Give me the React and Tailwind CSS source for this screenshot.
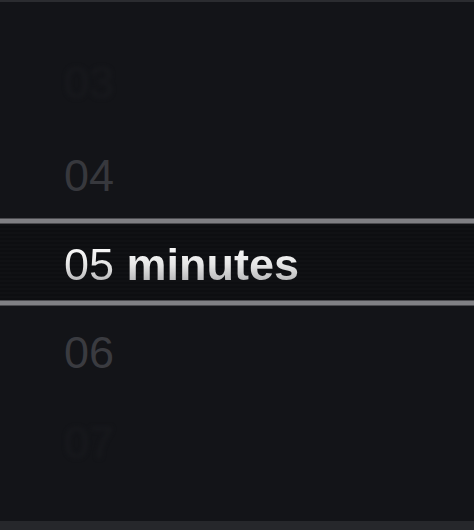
const font = { fontFamily: '"Liberation Sans", Arial, sans-serif' };

function DimRow({ value, className, textClass }) {
  return (
    <div className={`flex items-center pl-[64px] ${className}`}>
      <span className={`text-[45px] leading-none ${textClass}`}>{value}</span>
    </div>
  );
}

export default function App() {
  return (
    <div className="flex h-[530px] w-full flex-col bg-[#131418]" style={font}>
      <div className="h-[2px] bg-[#2b2c30]" />
      <DimRow value="03" className="mt-[36px] h-[88px]" textClass="text-[#18191d] blur-[2px]" />
      <DimRow value="04" className="h-[92px] pt-[6px]" textClass="text-[#37383d]" />
      <div className="h-[6px] border-y border-[#4b4b4f] bg-[#808084]" />
      <div className="flex h-[76px] items-center bg-[#0f1013] bg-[repeating-linear-gradient(180deg,#101114_0px,#101114_2px,#0d0e11_2px,#0d0e11_4px)] pl-[64px] pt-[4px]">
        <span className="bg-linear-to-b from-white via-[#e6e6e6] to-[#a9a9ab] bg-clip-text text-[45px] leading-none text-transparent">
          05 <span className="font-bold">minutes</span>
        </span>
      </div>
      <div className="h-[6px] border-y border-[#4b4b4f] bg-[#808084]" />
      <DimRow value="06" className="h-[92px]" textClass="text-[#3a3b40]" />
      <DimRow value="07" className="h-[88px]" textClass="text-[#18191d] blur-[2px]" />
      <div className="flex-1" />
      <div className="h-[9px] bg-[#26272b]" />
    </div>
  );
}
